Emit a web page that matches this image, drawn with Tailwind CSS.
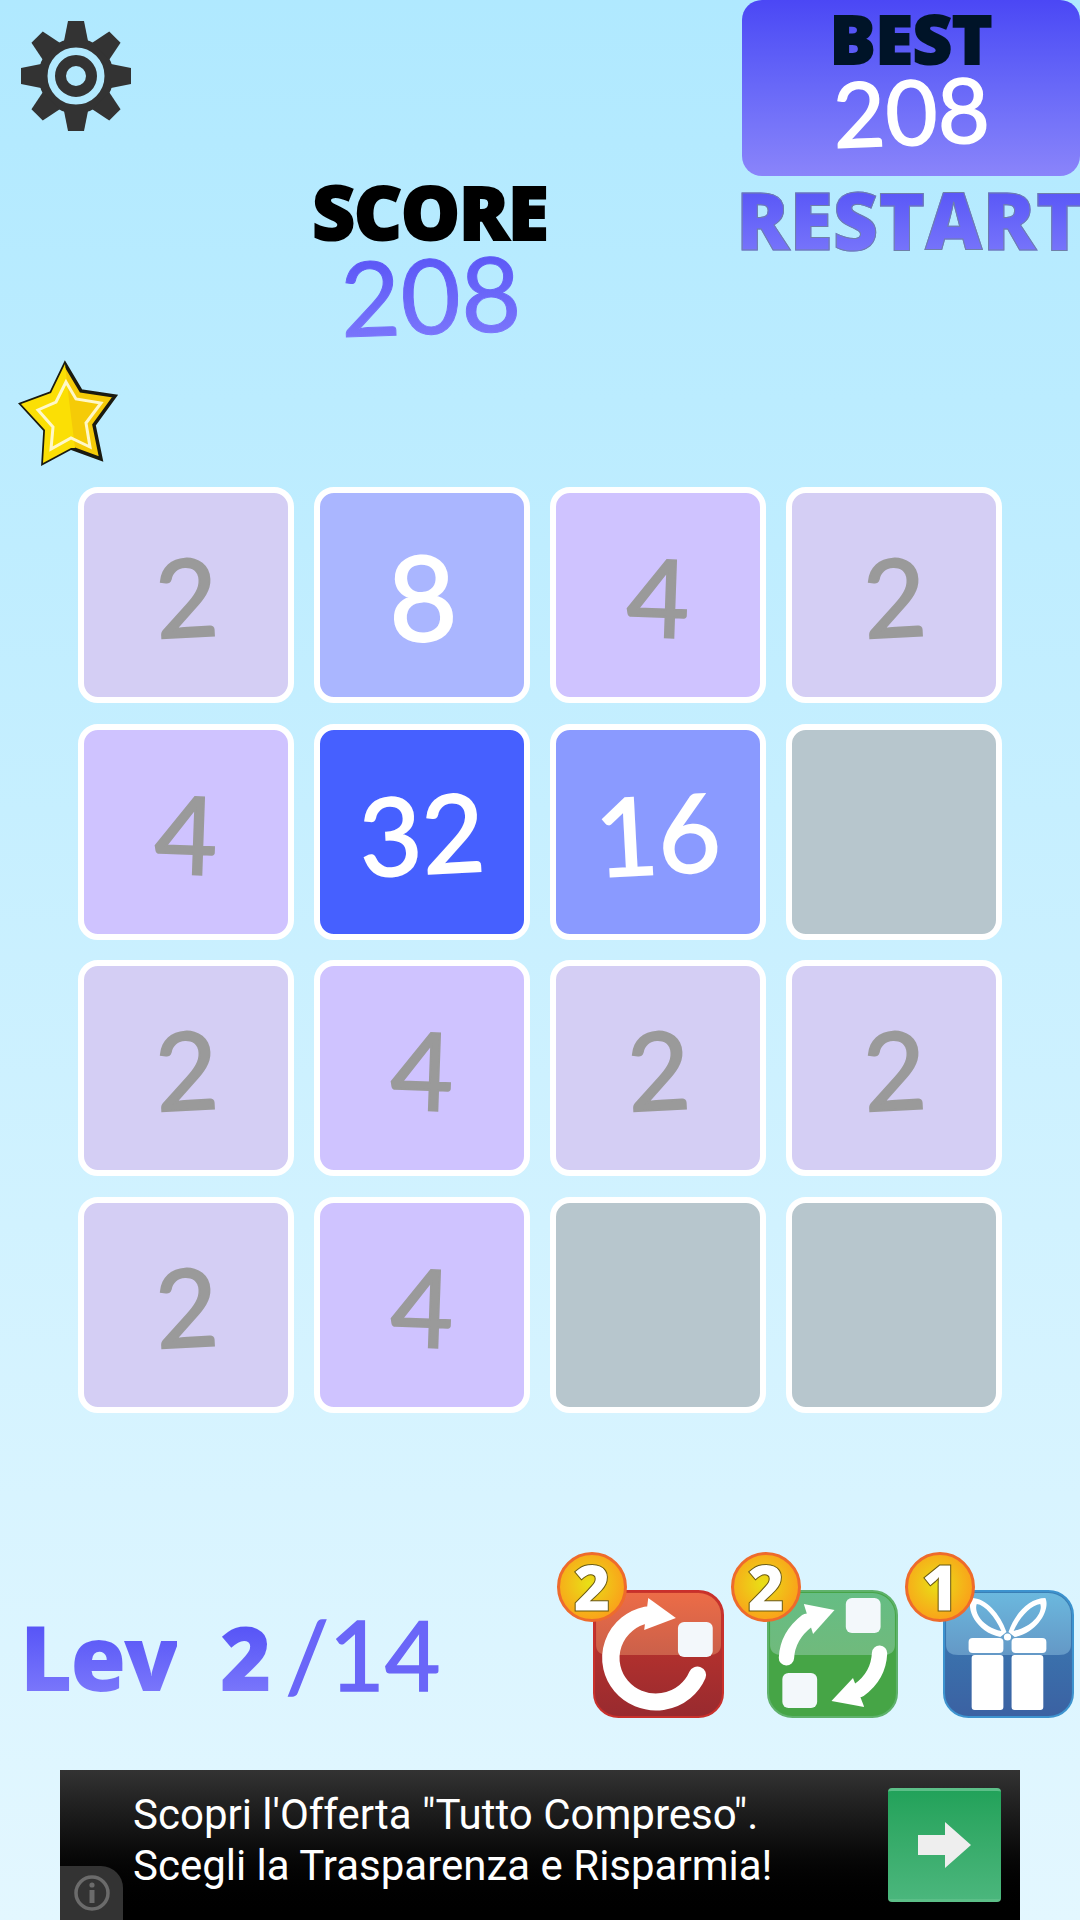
<!DOCTYPE html>
<html lang="it">

<head>
  <meta charset="UTF-8">
  <meta name="viewport" content="width=device-width, initial-scale=1.0">
  <title>2048 Lev</title>
  <script src="https://cdn.jsdelivr.net/npm/@tailwindcss/browser@4"></script>
</head>

<body class="bg-[#e3f7ff]">
  <main class="w-[1080px] h-[1920px] overflow-hidden flex flex-col bg-gradient-to-b from-[#b0e9ff] to-[#e3f7ff] font-['Lato',sans-serif]">

    <!-- Header -->
    <header class="flex h-[360px] shrink-0">
      <div class="w-[147px] pl-[21px] pt-[18px]">
        <svg class="w-[112px] h-[116px]" viewBox="0 0 112 116" fill="#333">
          <g transform="translate(55 58)">
            <circle r="33" fill="none" stroke="#333" stroke-width="9" />
            <circle r="15.5" fill="none" stroke="#333" stroke-width="11" />
            <path d="M-12 -35 L-8 -55 L8 -55 L12 -35 Z" />
            <path transform="rotate(45)" d="M-12 -35 L-8 -55 L8 -55 L12 -35 Z" />
            <path transform="rotate(90)" d="M-12 -35 L-8 -55 L8 -55 L12 -35 Z" />
            <path transform="rotate(135)" d="M-12 -35 L-8 -55 L8 -55 L12 -35 Z" />
            <path transform="rotate(180)" d="M-12 -35 L-8 -55 L8 -55 L12 -35 Z" />
            <path transform="rotate(225)" d="M-12 -35 L-8 -55 L8 -55 L12 -35 Z" />
            <path transform="rotate(270)" d="M-12 -35 L-8 -55 L8 -55 L12 -35 Z" />
            <path transform="rotate(315)" d="M-12 -35 L-8 -55 L8 -55 L12 -35 Z" />
          </g>
        </svg>
      </div>

      <div class="w-[566px] flex flex-col items-center pt-[164px]">
        <p class="font-['Open_Sans'] font-extrabold text-[74px] leading-[96px] text-black tracking-[-1px] [-webkit-text-stroke:2px_#000]">SCORE</p>
        <p class="text-[104px] leading-[84px] -mt-[8px] -rotate-2 bg-gradient-to-b from-[#5a55f6] to-[#7a75fb] bg-clip-text text-transparent [-webkit-text-stroke:1px_transparent]">208</p>
      </div>

      <div class="w-[338px] ml-[29px] flex flex-col">
        <div class="h-[176px] rounded-[20px] bg-gradient-to-b from-[#4b47f5] to-[#8a84fa] flex flex-col items-center">
          <p class="font-['Open_Sans'] font-extrabold text-[68px] leading-[76px] text-[#001428] [-webkit-text-stroke:2px_#001428]">BEST</p>
          <p class="text-[90px] leading-[76px] -mt-[4px] -rotate-2 text-white [-webkit-text-stroke:1.5px_#fff]">208</p>
        </div>
        <p class="font-['Open_Sans'] font-extrabold text-[79px] leading-[84px] mt-[2px] -ml-[6px] whitespace-nowrap bg-gradient-to-b from-[#5450f6] to-[#7c78fb] bg-clip-text text-transparent [-webkit-text-stroke:1px_#6f80a8]">RESTART</p>
      </div>
    </header>

    <!-- Stella -->
    <div class="h-[127px] shrink-0 pl-[18px]">
      <svg class="w-[102px] h-[106px]" viewBox="15 360 102 106">
        <polygon points="62,364 78,391 112,396 91,425 98,459 68,448 40,463 42,430 18,404 48,393" fill="#f5cb07" stroke="#1a1a10" stroke-width="3.5" stroke-linejoin="miter" />
        <polygon points="62,364 66,400 72,448 68,448 40,463 42,430 18,404 48,393" fill="#fbdf05" />
        <polygon points="63,382 73,399 98,403 83,423 87,447 68,438 48,449 50,427 35,410 53,402" fill="none" stroke="#fff8c8" stroke-width="3" />
      </svg>
    </div>

    <!-- Griglia -->
    <section class="ml-[78px] w-[924px] grid grid-cols-4 auto-rows-[216px] gap-x-[20px] gap-y-[20.5px] shrink-0">
      <div class="rounded-[20px] border-[6px] border-white bg-[#d4cef4] flex items-center justify-center text-[108px] text-[#9a9a9a] [-webkit-text-stroke:2px_#9a9a9a]"><span class="-rotate-3">2</span></div>
      <div class="rounded-[20px] border-[6px] border-white bg-[#aab6ff] flex items-center justify-center text-[118px] text-white [-webkit-text-stroke:2px_#fff]"><span class="-rotate-3">8</span></div>
      <div class="rounded-[20px] border-[6px] border-white bg-[#cfc3ff] flex items-center justify-center text-[108px] text-[#9a9a9a] [-webkit-text-stroke:2px_#9a9a9a]"><span class="rotate-2">4</span></div>
      <div class="rounded-[20px] border-[6px] border-white bg-[#d4cef4] flex items-center justify-center text-[108px] text-[#9a9a9a] [-webkit-text-stroke:2px_#9a9a9a]"><span class="-rotate-3">2</span></div>

      <div class="rounded-[20px] border-[6px] border-white bg-[#cfc3ff] flex items-center justify-center text-[108px] text-[#9a9a9a] [-webkit-text-stroke:2px_#9a9a9a]"><span class="rotate-2">4</span></div>
      <div class="rounded-[20px] border-[6px] border-white bg-[#4660ff] flex items-center justify-center text-[108px] text-white [-webkit-text-stroke:2px_#fff]"><span class="-rotate-3">32</span></div>
      <div class="rounded-[20px] border-[6px] border-white bg-[#8a9aff] flex items-center justify-center text-[108px] text-white [-webkit-text-stroke:2px_#fff]"><span class="-rotate-3">16</span></div>
      <div class="rounded-[20px] border-[6px] border-white bg-[#b7c6cd]"></div>

      <div class="rounded-[20px] border-[6px] border-white bg-[#d4cef4] flex items-center justify-center text-[108px] text-[#9a9a9a] [-webkit-text-stroke:2px_#9a9a9a]"><span class="-rotate-3">2</span></div>
      <div class="rounded-[20px] border-[6px] border-white bg-[#cfc3ff] flex items-center justify-center text-[108px] text-[#9a9a9a] [-webkit-text-stroke:2px_#9a9a9a]"><span class="rotate-2">4</span></div>
      <div class="rounded-[20px] border-[6px] border-white bg-[#d4cef4] flex items-center justify-center text-[108px] text-[#9a9a9a] [-webkit-text-stroke:2px_#9a9a9a]"><span class="-rotate-3">2</span></div>
      <div class="rounded-[20px] border-[6px] border-white bg-[#d4cef4] flex items-center justify-center text-[108px] text-[#9a9a9a] [-webkit-text-stroke:2px_#9a9a9a]"><span class="-rotate-3">2</span></div>

      <div class="rounded-[20px] border-[6px] border-white bg-[#d4cef4] flex items-center justify-center text-[108px] text-[#9a9a9a] [-webkit-text-stroke:2px_#9a9a9a]"><span class="-rotate-3">2</span></div>
      <div class="rounded-[20px] border-[6px] border-white bg-[#cfc3ff] flex items-center justify-center text-[108px] text-[#9a9a9a] [-webkit-text-stroke:2px_#9a9a9a]"><span class="rotate-2">4</span></div>
      <div class="rounded-[20px] border-[6px] border-white bg-[#b7c6cd]"></div>
      <div class="rounded-[20px] border-[6px] border-white bg-[#b7c6cd]"></div>
    </section>

    <!-- Livello e bonus -->
    <div class="flex h-[128px] mt-[177.5px] shrink-0">
      <div class="w-[593px] pl-[20px] pt-[26px] flex items-baseline h-[110px] whitespace-nowrap">
        <span class="inline-block font-['Open_Sans'] font-extrabold text-[90px] leading-[76px] tracking-[-2px] bg-gradient-to-b from-[#5450f6] to-[#7b77fb] bg-clip-text text-transparent">Lev</span>
        <span class="inline-block font-['Open_Sans'] font-extrabold text-[88px] leading-[76px] ml-[43px] bg-gradient-to-b from-[#5450f6] to-[#7b77fb] bg-clip-text text-transparent">2</span>
        <span class="text-[96px] leading-[76px] ml-[14px] text-[#6a66f8] [-webkit-text-stroke:1.5px_#6a66f8]">/14</span>
      </div>

      <div class="relative w-[131px] h-[128px]">
        <svg class="w-[131px] h-[128px]" viewBox="0 0 128 128" preserveAspectRatio="none">
          <defs>
            <linearGradient id="redBase" x1="0" y1="0" x2="0" y2="1">
              <stop offset="0" stop-color="#c9372c" />
              <stop offset="1" stop-color="#982a2f" />
            </linearGradient>
            <linearGradient id="redGloss" x1="0" y1="0" x2="0" y2="1">
              <stop offset="0" stop-color="#ec6c47" />
              <stop offset="1" stop-color="#cb604a" />
            </linearGradient>
          </defs>
          <rect x="1" y="1" width="126" height="126" rx="24" fill="url(#redBase)" stroke="#c9302c" stroke-width="2" />
          <path d="M3 25 A22 22 0 0 1 25 3 H103 A22 22 0 0 1 125 25 V55 Q125 65 113 65 H15 Q3 65 3 55 Z" fill="url(#redGloss)" />
          <path d="M102 85 A44 44 0 1 1 52 25" fill="none" stroke="#fff" stroke-width="17" stroke-linecap="round" />
          <polygon points="54,8 81,28 50,40" fill="#fff" />
          <rect x="83" y="32" width="34" height="35" rx="6" fill="#f3f8fb" />
        </svg>
        <div class="absolute -left-[36px] -top-[38px] w-[70px] h-[70px] rounded-full border-[3px] border-[#ee6b2c] bg-[radial-gradient(circle_at_45%_45%,#e8e016,#f9a51a_70%)] flex items-center justify-center font-['Open_Sans'] font-extrabold text-[64px] leading-none text-white [-webkit-text-stroke:1px_#6b5a10]">2</div>
      </div>

      <div class="relative w-[131px] h-[128px] ml-[43px]">
        <svg class="w-[131px] h-[128px]" viewBox="0 0 128 128" preserveAspectRatio="none">
          <defs>
            <linearGradient id="greenGloss" x1="0" y1="0" x2="0" y2="1">
              <stop offset="0" stop-color="#65bd84" />
              <stop offset="1" stop-color="#70ba7c" />
            </linearGradient>
          </defs>
          <rect x="1" y="1" width="126" height="126" rx="24" fill="#46a546" stroke="#5fb26c" stroke-width="2" />
          <path d="M3 25 A22 22 0 0 1 25 3 H103 A22 22 0 0 1 125 25 V55 Q125 65 113 65 H15 Q3 65 3 55 Z" fill="url(#greenGloss)" />
          <rect x="77" y="8" width="34" height="35" rx="6" fill="#f3f8fb" />
          <rect x="15" y="83" width="34" height="35" rx="6" fill="#f3f8fb" />
          <path d="M19 68 Q20 46 39 31" fill="none" stroke="#fff" stroke-width="15" stroke-linecap="round" />
          <polygon points="36,14 66,20 45,44" fill="#fff" />
          <path d="M110 63 Q109 86 90 100" fill="none" stroke="#fff" stroke-width="15" stroke-linecap="round" />
          <polygon points="95,117 63,111 84,88" fill="#fff" />
        </svg>
        <div class="absolute -left-[36px] -top-[38px] w-[70px] h-[70px] rounded-full border-[3px] border-[#ee6b2c] bg-[radial-gradient(circle_at_45%_45%,#e8e016,#f9a51a_70%)] flex items-center justify-center font-['Open_Sans'] font-extrabold text-[64px] leading-none text-white [-webkit-text-stroke:1px_#6b5a10]">2</div>
      </div>

      <div class="relative w-[131px] h-[128px] ml-[45px]">
        <svg class="w-[131px] h-[128px]" viewBox="0 0 128 128" preserveAspectRatio="none">
          <defs>
            <linearGradient id="blueBase" x1="0" y1="0" x2="0" y2="1">
              <stop offset="0" stop-color="#3a80b6" />
              <stop offset="1" stop-color="#3b61a2" />
            </linearGradient>
            <linearGradient id="blueGloss" x1="0" y1="0" x2="0" y2="1">
              <stop offset="0" stop-color="#6bb8de" />
              <stop offset="1" stop-color="#6498c6" />
            </linearGradient>
          </defs>
          <rect x="1" y="1" width="126" height="126" rx="24" fill="url(#blueBase)" stroke="#3d93cf" stroke-width="2" />
          <path d="M3 25 A22 22 0 0 1 25 3 H103 A22 22 0 0 1 125 25 V55 Q125 65 113 65 H15 Q3 65 3 55 Z" fill="url(#blueGloss)" />
          <rect x="25" y="48" width="34" height="15" rx="4" fill="#fff" />
          <rect x="67" y="48" width="34" height="15" rx="4" fill="#fff" />
          <rect x="28" y="65" width="31" height="55" rx="3" fill="#fff" />
          <rect x="67" y="65" width="31" height="55" rx="3" fill="#fff" />
          <circle cx="63" cy="47" r="3.5" fill="#fff" />
          <path fill-rule="evenodd" d="M62 42 C56 24 42 8 28 8 C22 18 32 42 56 47 Z M57 41 C51 27 41 15 33 14 C30 22 38 37 57 41 Z" fill="#fff" />
          <path fill-rule="evenodd" d="M64 42 C70 24 84 8 100 8 C105 18 94 42 70 47 Z M69 41 C75 27 86 15 95 14 C98 22 88 37 69 41 Z" fill="#fff" />
        </svg>
        <div class="absolute -left-[38px] -top-[38px] w-[70px] h-[70px] rounded-full border-[3px] border-[#ee6b2c] bg-[radial-gradient(circle_at_45%_45%,#e8e016,#f9a51a_70%)] flex items-center justify-center font-['Open_Sans'] font-extrabold text-[64px] leading-none text-white [-webkit-text-stroke:1px_#6b5a10]">1</div>
      </div>
    </div>

    <!-- Banner -->
    <aside class="relative ml-[60px] mt-[52px] w-[960px] h-[150px] shrink-0 bg-gradient-to-b from-[#333333] to-[#000000] flex items-center">
      <div class="w-[828px] pl-[73px] -mt-[10px] font-['Roboto',sans-serif] text-[42px] leading-[51px] text-white whitespace-nowrap">
        <p>Scopri l'Offerta "Tutto Compreso".</p>
        <p>Scegli la Trasparenza e Risparmia!</p>
      </div>
      <div class="w-[113px] h-[114px] rounded-[4px] border-t-[3px] border-b-[3px] border-[#5cbf88] bg-gradient-to-b from-[#22a25a] to-[#4ab67c] flex items-center justify-center">
        <svg class="w-[54px] h-[46px]" viewBox="0 0 54 46">
          <polygon points="0,13 27,13 27,0 53,23 27,46 27,33 0,33" fill="#eeeeee" />
        </svg>
      </div>
      <div class="absolute left-0 bottom-0 w-[63px] h-[54px] rounded-tr-[22px] bg-[#333333] flex items-center justify-center">
        <svg class="w-[38px] h-[38px]" viewBox="0 0 38 38">
          <circle cx="19" cy="19" r="16" fill="none" stroke="#6b6b6b" stroke-width="3.5" />
          <circle cx="19" cy="11" r="2.6" fill="#6b6b6b" />
          <rect x="16.5" y="16" width="5" height="13" fill="#6b6b6b" />
        </svg>
      </div>
    </aside>
  </main>
</body>

</html>
